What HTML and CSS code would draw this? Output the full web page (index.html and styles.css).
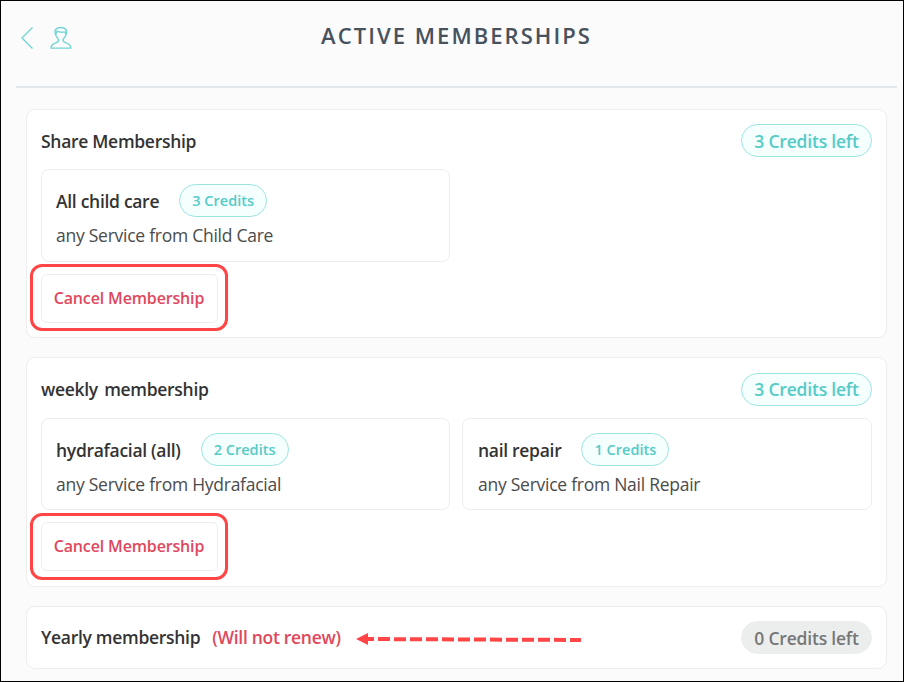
FILE: index.html
```
<!DOCTYPE html>
<html lang="en">
<head>
  <meta charset="UTF-8" />
  <meta name="viewport" content="width=device-width, initial-scale=1" />
  <title>Active Memberships</title>
  <link rel="stylesheet" href="styles.css">
</head>
<body>
  <div class="page">
    <header class="header">
      <div class="nav">
        <svg class="back-icon" width="14" height="24" viewBox="0 0 14 24">
          <path d="M12.5 1.5 L2 12 L12.5 22.5" />
        </svg>
        <svg class="user-icon" width="22" height="24" viewBox="0 0 22 24">
          <path d="M8.6 14 C8.7 12.4 5.9 11.4 5.5 8.2 C3.7 4 6.5 1.5 10.8 1.5 C15.1 1.5 17.9 4 16.1 8.2 C15.7 11.4 12.9 12.4 13 14 C12.9 15.8 14.1 16.2 16 16.8 C19 17.8 20.9 18.8 20.9 22.1 L1 22.1 C1 18.8 2.8 17.8 5.8 16.8 C7.8 16.2 8.7 15.8 8.6 14 Z" />
          <path d="M5.5 8.5 C6.6 7.6 6.8 6.7 7 5.2 C9 6.2 12.5 6.3 14.9 5.9 L16.1 8.5" />
        </svg>
      </div>
      <h1>ACTIVE MEMBERSHIPS</h1>
    </header>

    <main class="list">
      <!-- Share Membership -->
      <section class="card">
        <div class="card-head">
          <h2>Share Membership</h2>
          <span class="badge">3 Credits left</span>
        </div>
        <div class="services">
          <div class="service">
            <div class="service-title">
              <h3>All child care</h3>
              <span class="badge small">3 Credits</span>
            </div>
            <p>any Service from Child Care</p>
          </div>
        </div>
        <button class="cancel">Cancel Membership</button>
      </section>

      <!-- Weekly membership -->
      <section class="card weekly">
        <div class="card-head">
          <h2>weekly membership</h2>
          <span class="badge">3 Credits left</span>
        </div>
        <div class="services">
          <div class="service">
            <div class="service-title">
              <h3>hydrafacial (all)</h3>
              <span class="badge small">2 Credits</span>
            </div>
            <p>any Service from Hydrafacial</p>
          </div>
          <div class="service">
            <div class="service-title">
              <h3>nail repair</h3>
              <span class="badge small">1 Credits</span>
            </div>
            <p>any Service from Nail Repair</p>
          </div>
        </div>
        <button class="cancel">Cancel Membership</button>
      </section>

      <!-- Yearly membership -->
      <section class="card yearly">
        <div class="card-head">
          <h2>Yearly membership</h2>
          <span class="note">(Will not renew)</span>
          <svg class="arrow" width="227" height="14" viewBox="0 0 227 14">
            <path class="arrow-line" d="M10 7 L225 8" />
            <path class="arrow-tip" d="M0 7 L12 1 L12 13 Z" />
          </svg>
          <span class="badge empty">0 Credits left</span>
        </div>
      </section>
    </main>
  </div>
</body>
</html>
```

FILE: styles.css
```
* {
  margin: 0;
  padding: 0;
  box-sizing: border-box;
  font-family: "Open Sans", sans-serif;
}

.page {
  height: 682px;
  border: 1px solid #000;
  background: #fbfbfb;
  overflow: hidden;
}

.header {
  display: grid;
  grid-template-columns: 1fr auto 1fr;
  align-items: start;
  height: 87px;
  margin: 0 6px 0 15px;
  border-bottom: 2px solid #e1e7eb;
}

.nav {
  display: flex;
  gap: 16px;
  padding: 25px 0 0 4px;
}

.nav svg {
  fill: none;
  stroke: #72d5d4;
  stroke-width: 1.4;
}

h1 {
  padding-top: 18px;
  font-size: 22px;
  line-height: 32px;
  font-weight: 600;
  letter-spacing: 2.05px;
  color: #47525d;
}

.list {
  display: flex;
  flex-direction: column;
  gap: 19px;
  padding: 21px 16px 0 25px;
}

.card {
  padding: 14px;
  border: 1px solid #ededed;
  border-radius: 9px;
  background: #fff;
}

.card-head {
  display: flex;
  align-items: center;
  height: 33px;
}

h2,
h3,
.note {
  font-size: 17.5px;
  line-height: 24px;
  font-weight: 600;
  letter-spacing: -0.3px;
  color: #333;
}

.weekly h2 {
  word-spacing: 2px;
}

.note {
  margin-left: 12px;
  color: #e0485c;
}

.arrow {
  margin: 3px 0 0 15px;
}

.arrow-line {
  fill: none;
  stroke: #ff4545;
  stroke-width: 4;
  stroke-dasharray: 12 4;
  stroke-dashoffset: 4;
}

.arrow-tip {
  fill: #ff4545;
}

.badge {
  display: flex;
  align-items: center;
  justify-content: center;
  width: 131px;
  height: 33px;
  margin-left: auto;
  border: 1px solid #9be5e1;
  border-radius: 17px;
  background: #f5fffe;
  color: #55cbc8;
  font-size: 17.5px;
  font-weight: 600;
  letter-spacing: -0.2px;
}

.badge.small {
  width: 88px;
  margin-left: 20px;
  font-size: 14.5px;
  letter-spacing: 0;
}

.badge.empty {
  border-color: #eceeee;
  background: #eceeee;
  color: #777;
}

.services {
  display: grid;
  grid-template-columns: 409px 1fr;
  gap: 12px;
  margin-top: 12px;
}

.service {
  height: 93px;
  padding: 14px;
  border: 1px solid #ededed;
  border-radius: 8px;
}

.service-title {
  display: flex;
  align-items: center;
  height: 33px;
}

.service p {
  margin-top: 6px;
  font-size: 17.5px;
  line-height: 24px;
  letter-spacing: -0.26px;
  color: #4b4b4b;
}

.cancel {
  position: relative;
  display: block;
  width: 177px;
  height: 49px;
  margin-top: 12px;
  padding: 0 1px 2px 0;
  border: 1px solid #ededed;
  border-radius: 6px;
  background: #fff;
  color: #e0485c;
  font-size: 16px;
  font-weight: 600;
  letter-spacing: -0.15px;
  white-space: nowrap;
}

/* red outline around the button */
.cancel::after {
  content: "";
  position: absolute;
  top: -11px;
  left: -12px;
  box-sizing: border-box;
  width: 198px;
  height: 67px;
  border: 3px solid #ff4545;
  border-radius: 12px;
}

.weekly {
  padding-bottom: 15px;
}

.weekly .card-head .badge {
  margin-top: 1px;
}

.weekly .services {
  margin-top: 13px;
}

.weekly .service {
  height: 92px;
}

.weekly .service:last-child {
  padding-left: 15px;
}

.weekly .cancel::after {
  top: -10px;
}

.yearly h2,
.yearly .note {
  margin-top: -1px;
}
```
